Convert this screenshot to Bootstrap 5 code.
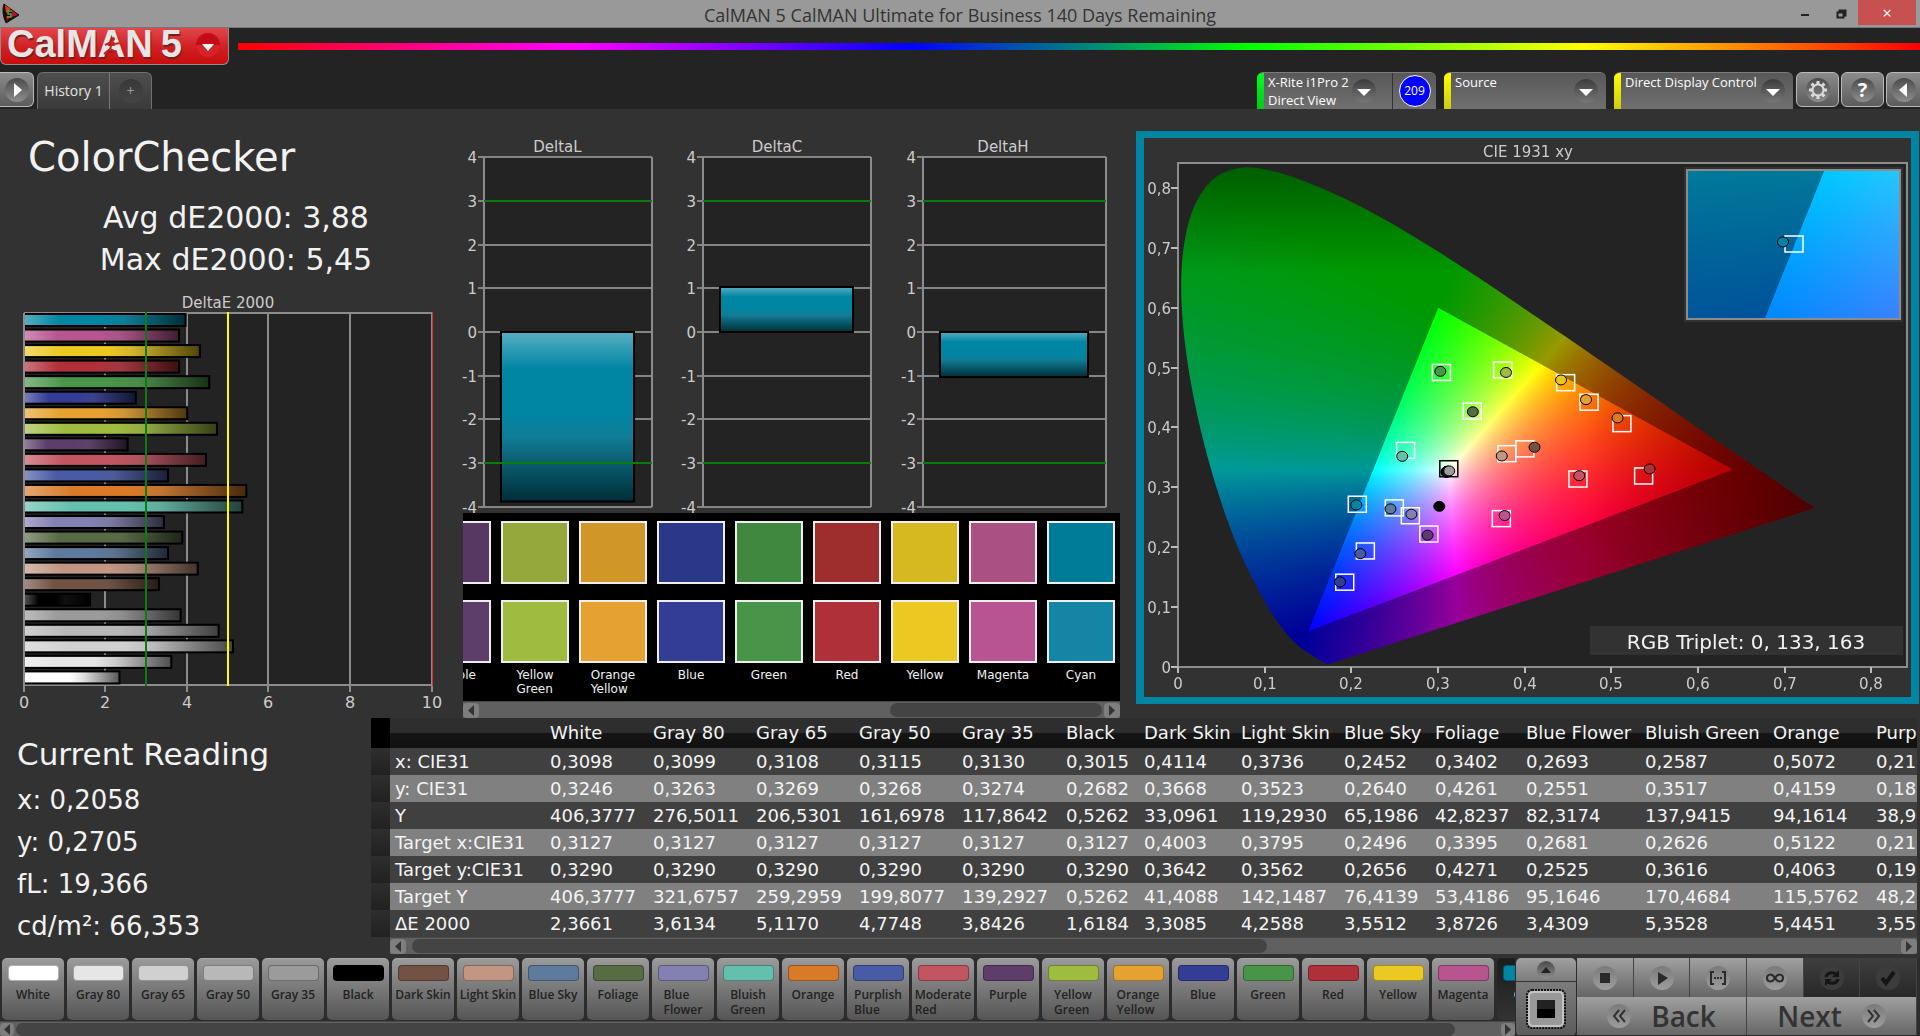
<!DOCTYPE html>
<html lang="en">
<head>
<meta charset="utf-8">
<meta name="viewport" content="width=device-width, initial-scale=1">
<title>CalMAN 5</title>
<link rel="stylesheet" href="https://cdn.jsdelivr.net/npm/bootstrap@5.3.0/dist/css/bootstrap.min.css">
<style>
body{background:#323232;color:#f2f2f2;font-family:"DejaVu Sans",sans-serif;min-height:100vh;overflow:hidden;line-height:1.2}
button{border:0;padding:0;color:inherit;font-family:inherit}
svg text{font-family:"DejaVu Sans",sans-serif;fill:#ccc}
.ui-font{font-family:"Open Sans","Noto Sans",sans-serif}
.titlebar{height:28px;background:#999;color:#333;border-bottom:1px solid #777}
.titlebar .caption{font-size:18px;line-height:30px}
.win-btn{width:43px;height:25px;background:none;color:#222}
.win-close{width:58px;background:#c75050;color:#fff;font-size:16px;line-height:22px}
.top-zone{background:#232323}
.logo-btn{width:229px;height:37px;background:linear-gradient(#e2474b,#cf1f22 55%,#c90d0d);border:1px solid #8d8d8d;border-top:0;border-radius:0 0 6px 6px;padding-left:6px}
.logo-btn svg{display:block;overflow:visible}
.logo-word{font-weight:700;font-size:38px;line-height:32px;color:#e6e6e6;font-family:"Liberation Sans",sans-serif;text-shadow:1px 2px 1px #70201c}
.rainbow{height:7px;margin:15px 0 0 9px;background:linear-gradient(90deg,#f00,#f0f,#00f,#0f0,#ff0,#f00)}
.tool-row{padding-top:7px}
.tool-btn{width:43px;height:35px;border:1px solid #b9b9b9;border-radius:6px;background:linear-gradient(#8b8b8b,#5c5c5c)}
.tool-btn.open-left{width:34px;border-left:0;border-radius:0 6px 6px 0}
.tool-btn.open-right{width:34px;border-right:0;border-radius:6px 0 0 6px}
.tool-set{gap:2px;margin-left:3px}
.orb{width:24px;height:24px;border-radius:50%;background:linear-gradient(#4a4a4a,#8e8e8e);flex:none;display:flex;align-items:center;justify-content:center}
.orb-dark{background:linear-gradient(#3c3c3c,#777)}
.orb-faint{background:linear-gradient(#383838,#454545);color:#999}
.hist{height:37px;margin-left:3px;border:1px solid #707070;border-bottom:0;border-radius:6px 6px 0 0;background:linear-gradient(#4e4e4e,#3a3a3a);font-size:14px;color:#e4e4e4;width:115px}
.hist .tab-name{width:72px;border-right:1px solid #777}
.meter{height:37px;border-radius:6px 6px 0 0;background:linear-gradient(#585858,#707070);border-top:1px solid #7c7c7c;overflow:hidden;font-size:13px;line-height:18px;color:#fff}
.meter .strip{width:7px;flex:none}
.strip-g{background:linear-gradient(#00ff20,#00c81c)}
.strip-y{background:linear-gradient(#ffff00,#cccc10)}
.meter-a{width:179px}.meter-b{width:162px}.meter-c{width:179px}
.count-zone{width:44px;border-left:1px solid #333}
.count{width:32px;height:32px;border-radius:50%;background:#00f;border:1px solid #fff;font-size:12px;line-height:30px}
.workspace{padding-top:1px}
.side-col{width:440px;flex:none}
.mid-col{width:690px;flex:none;padding-left:9px}
.page-title{font-size:40px;line-height:48px;padding:23px 0 0 28px;margin:0 0 16px}
.stats{font-size:30px;line-height:42px;padding-left:32px;margin-bottom:9px}
.swatches{background:#000;margin-left:14px;width:657px;height:188px;padding:8px 5px 0 0;font-size:12px;line-height:14px;gap:10px;overflow:hidden}
.swatch{width:68px;flex:none}
.patch{height:63px;border:2px solid #eee}
.patch-gap{margin-bottom:16px}
.swatch .name{margin-top:5px}
.scroller{height:17px;background:#606060;border-top:1px solid #484848;gap:2px}
.swatch-scroll{width:657px;margin-left:14px}
.swatch-scroll .thumb{width:212px}
.scroller button{width:16px;height:15px;background:#7e7e7e;border-radius:4px;flex:none;line-height:0}
.scroller .thumb{height:14px;background:#444;border-radius:7px}
.cie-col{padding-left:6px}
.cie{border:solid #0085a3;border-width:7px 8px;margin-top:21px;margin-right:1px;position:relative}
.cie svg,.cie canvas{display:block;width:100%}
.cie canvas{position:absolute;left:0;top:0}
.cie svg{position:relative}
.reading{width:371px;flex:none;padding:15px 0 0 17px;font-size:26px;line-height:42px}
.reading h2{font-size:31px;line-height:42px;margin-bottom:4px}
.grid-wrap{overflow:hidden;margin-right:3px;flex:1 1 0;min-width:0}
.readings{table-layout:fixed;width:1600px;font-size:18px;line-height:26px;color:#f4f4f4;border-collapse:collapse;white-space:nowrap}
.readings th,.readings td{font-weight:400;padding:0 0 0 5px;height:27px;overflow:hidden}
.readings thead th,.readings thead td{height:30px;background:linear-gradient(#2e2e2e 48%,#151515 52%,#111)}
.readings tbody tr:nth-child(odd){background:#404040}
.readings tbody tr:nth-child(even){background:#808080}
.readings tbody td:first-child{background:linear-gradient(#2e2e2e,#212121)}
.readings thead td:first-child{background:#000}
.grid-scroll{margin-left:19px}
.dock{background:#2c2c2c;height:78px}
.chips{flex:1 1 0;min-width:0;overflow:hidden;gap:3px;padding-left:2px}
.chip{width:62px;height:62px;flex:none;border-radius:5px;border-top:1px solid #aaa;background:linear-gradient(#9a9a9a,#555);color:#222;font-size:12px;font-weight:600;line-height:15px;padding-top:6px}
.chip .led{width:51px;height:16px;border-radius:4px;border:1px solid rgba(0,0,0,.3);margin-bottom:6px}
.chip.active{background:linear-gradient(#1c1c1c,#333);color:#fff;border-color:#222}
.dock-scroll{height:15px}
.dock-scroll .thumb{height:13px}.dock-scroll button{width:14px;height:13px}
.pick{width:60px;border-radius:5px;overflow:hidden;margin:0 1px 0 1px}
.pick .up{height:24px;background:linear-gradient(#a0a0a0,#7c7c7c);border-bottom:1px solid #333}
.pick .orb{width:18px;height:18px}
.pick .target{height:53px;background:linear-gradient(#7c7c7c,#5c5c5c)}
.transport{width:343px;padding-right:3px}
.transport button{background:linear-gradient(#a0a0a0,#666);color:#2a2a2a;border-right:1px solid #444}
.transport .orb{background:linear-gradient(#7a7a7a,#9d9d9d)}
.transport .row-a{height:39px}.transport .row-b{height:38px}
.transport .off{background:linear-gradient(#3e3e3e,#282828);color:#151515}
.transport .off .orb{background:#3c3c3c}
.row-b button{gap:20px}
.nav-word{font-size:28px;font-weight:600;color:#333;line-height:36px}
</style>
</head>
<body class="d-flex flex-column">
<header class="top-zone">
  <div class="titlebar ui-font position-relative">
    <svg class="position-absolute start-0 top-0" width="24" height="26" viewBox="0 0 24 26"><path d="M4 4 19 15 6 23Q1 12 4 4Z" fill="#210b08" stroke="#111"/><path d="M5 5 11 9 6 13Z" fill="#e3381c"/><path d="M12 10 18 15 12 17Z" fill="#b01430"/><path d="M6 16 11 16 7 21Z" fill="#c00"/><path d="M12 11H8V14H11V17H7" fill="none" stroke="#4fae3c" stroke-width="1.5"/></svg>
    <div class="caption text-center">CalMAN 5 CalMAN Ultimate for Business 140 Days Remaining</div>
    <div class="position-absolute end-0 top-0 d-flex">
      <button class="win-btn" aria-label="Minimize"><svg width="43" height="25"><path d="M29 15h8" stroke="#222" stroke-width="2"/></svg></button>
      <button class="win-btn ps-3" aria-label="Restore"><svg width="20" height="16" viewBox="0 0 20 16"><path d="M2.500 6.500h6v5h-6zM4.500 6V4.500h6v5H9" fill="none" stroke="#222" stroke-width="2"/></svg></button>
      <button class="win-btn win-close me-1" aria-label="Close">×</button>
    </div>
  </div>
  <div class="d-flex align-items-start">
    <button class="logo-btn flex-shrink-0 d-flex align-items-start position-relative" aria-label="CalMAN 5 menu">
      <span class="logo-word">CalMAN</span><span class="logo-word ms-2">5</span>
      <svg class="position-absolute start-0 top-0" width="220" height="36" viewBox="0 0 220 36" fill="none">
        <circle cx="112" cy="11" r="2" fill="#c82020"/><path d="M104 17l6-3 4 2 5-1M111 15l-2 6-6 5M109 21l6 3-2 6" stroke="#c82020" stroke-width="2"/>
        <circle cx="207" cy="17" r="12" fill="#c30c18"/><path d="M207 29a12 12 0 0 0 12-12h-24a12 12 0 0 0 12 12z" fill="#dd3636" opacity=".6"/><path d="M201 16h12l-6 7z" fill="#fff"/>
      </svg>
    </button>
    <div class="rainbow flex-grow-1"></div>
  </div>
  <div class="tool-row d-flex align-items-start ui-font">
    <button class="tool-btn open-left d-flex align-items-center justify-content-center" aria-label="Expand"><span class="orb"><svg width="24" height="24"><path d="M9 5l8 7-8 7z" fill="#fff"/></svg></span></button>
    <div class="hist d-flex align-items-stretch">
      <button class="tab-name bg-transparent">History 1</button>
      <button class="flex-grow-1 bg-transparent d-flex align-items-center justify-content-center" aria-label="Add"><span class="orb orb-faint">+</span></button>
    </div>
    <div class="ms-auto d-flex align-items-start">
      <div class="meter meter-a d-flex me-2"><span class="strip strip-g"></span><div class="ps-1 flex-grow-1 text-nowrap">X-Rite i1Pro 2<br>Direct View</div>
        <button class="orb orb-dark align-self-center me-3" aria-label="Meter menu"><svg width="24" height="24"><path d="M5 10h14l-7 7z" fill="#fff"/></svg></button>
        <div class="count-zone d-flex align-items-center justify-content-center"><span class="count text-center">209</span></div></div>
      <div class="meter meter-b d-flex me-2"><span class="strip strip-y"></span><div class="ps-1 flex-grow-1">Source</div><button class="orb orb-dark align-self-center me-2" aria-label="Source menu"><svg width="24" height="24"><path d="M5 10h14l-7 7z" fill="#fff"/></svg></button></div>
      <div class="meter meter-c d-flex"><span class="strip strip-y"></span><div class="ps-1 flex-grow-1 text-nowrap">Direct Display Control</div><button class="orb orb-dark align-self-center me-2" aria-label="Display menu"><svg width="24" height="24"><path d="M5 10h14l-7 7z" fill="#fff"/></svg></button></div>
      <div class="tool-set d-flex">
        <button class="tool-btn d-flex align-items-center justify-content-center" aria-label="Settings"><span class="orb"><svg width="24" height="24" viewBox="0 0 24 24"><circle cx="12" cy="12" r="5.500" fill="none" stroke="#ddd" stroke-width="2"/><g stroke="#ddd" stroke-width="3"><path d="M12 3v3M12 18v3M3 12h3M18 12h3M5.600 5.600l2 2M16.400 16.400l2 2M18.400 5.600l-2 2M7.600 16.400l-2 2"/></g></svg></span></button>
        <button class="tool-btn d-flex align-items-center justify-content-center" aria-label="Help"><span class="orb fw-bold fs-5 lh-1 text-white">?</span></button>
        <button class="tool-btn open-right d-flex align-items-center justify-content-center" aria-label="Collapse"><span class="orb"><svg width="24" height="24"><path d="M15 5l-8 7 8 7z" fill="#fff"/></svg></span></button>
      </div>
    </div>
  </div>
</header>

<main class="workspace">
  <div class="d-flex">
    <section class="side-col">
      <h1 class="page-title fw-normal">ColorChecker</h1>
      <div class="stats text-center">Avg dE2000: 3,88<br>Max dE2000: 5,45</div>
      <svg id="deltaE" class="d-block overflow-visible" width="440" height="425" viewBox="0 0 440 425"></svg>
    </section>
    <section class="mid-col">
      <div class="d-flex" id="deltas"></div>
      <div class="swatches d-flex justify-content-end" id="swatches"></div>
      <div class="scroller swatch-scroll d-flex align-items-center">
        <button aria-label="Scroll left"><svg width="16" height="15"><path d="M11 2v11L5 7.500z" fill="#333"/></svg></button><div class="flex-grow-1"></div><div class="thumb"></div><button aria-label="Scroll right"><svg width="16" height="15"><path d="M5 2v11l6-5.500z" fill="#333"/></svg></button>
      </div>
    </section>
    <section class="cie-col flex-grow-1">
      <div class="cie"><canvas id="gamut" width="767" height="559"></canvas><svg id="cieChart" viewBox="0 0 767 559"></svg></div>
    </section>
  </div>
  <div class="d-flex">
    <section class="reading"><h2 class="fw-normal">Current Reading</h2><div>x: 0,2058</div><div>y: 0,2705</div><div>fL: 19,366</div><div>cd/m²: 66,353</div></section>
    <section class="grid-wrap">
      <table class="readings" id="readings"></table>
      <div class="scroller grid-scroll d-flex align-items-center"><button aria-label="Scroll left"><svg width="16" height="15"><path d="M11 2v11L5 7.500z" fill="#333"/></svg></button><div class="thumb ms-1" style="width:56%"></div><div class="flex-grow-1"></div><button aria-label="Scroll right"><svg width="16" height="15"><path d="M5 2v11l6-5.500z" fill="#333"/></svg></button></div>
    </section>
  </div>
</main>

<footer class="dock ui-font d-flex mt-auto">
  <div class="d-flex flex-column flex-grow-1" style="min-width:0">
    <div class="chips d-flex" id="chips"></div>
    <div class="scroller dock-scroll d-flex align-items-center mt-auto"><button aria-label="Scroll left"><svg width="14" height="13"><path d="M10 1v11L4 6.500z" fill="#333"/></svg></button><div class="thumb" style="width:95%"></div><div class="flex-grow-1"></div><button aria-label="Scroll right"><svg width="14" height="13"><path d="M4 1v11l6-5.500z" fill="#333"/></svg></button></div>
  </div>
  <div class="pick flex-shrink-0">
    <button class="up w-100 d-flex align-items-center justify-content-center" aria-label="Up"><span class="orb"><svg class="d-block" width="18" height="18"><path d="M4 12h10L9 6z" fill="#222"/></svg></span></button>
    <button class="target w-100 d-flex align-items-center justify-content-center" aria-label="Measure"><svg width="40" height="40"><rect x="1" y="1" width="38" height="38" rx="5" fill="#999" stroke="#111" stroke-width="2" stroke-dasharray="2 1"/><rect x="3" y="3" width="34" height="34" rx="4" fill="none" stroke="#c4c4c4" stroke-width="2"/><path d="M11 11h18v18H11z" fill="#000"/><path d="M11 11h18v9H11z" fill="#222"/></svg></button>
  </div>
  <div class="transport flex-shrink-0">
    <div class="row-a d-flex" id="transport"></div>
    <div class="row-b d-flex">
      <button class="flex-fill w-50 d-flex align-items-center justify-content-center"><span class="orb"><svg class="d-block" width="24" height="24" fill="none" stroke="#333" stroke-width="2"><path d="M12 6l-5 6 5 6M18 6l-5 6 5 6"/></svg></span><span class="nav-word">Back</span></button>
      <button class="flex-fill w-50 d-flex align-items-center justify-content-center"><span class="nav-word">Next</span><span class="orb"><svg class="d-block" width="24" height="24" fill="none" stroke="#333" stroke-width="2"><path d="M6 6l5 6-5 6M12 6l5 6-5 6"/></svg></span></button>
    </div>
  </div>
</footer>

<script src="https://cdn.jsdelivr.net/npm/bootstrap@5.3.0/dist/js/bootstrap.bundle.min.js"></script>
<script>
// name, colour, dE2000, measured xy, target xy, reference colour
const patches = [
 ["White","#ffffff",2.34,.3098,.3246],["Gray 80","#e6e6e6",3.61,.3099,.3263],["Gray 65","#d0d0d0",5.12,.3108,.3269],["Gray 50","#b8b8b8",4.77,.3115,.3268],["Gray 35","#9b9b9b",3.84,.3130,.3274],["Black","#000000",1.62,.3015,.2682],
 ["Dark Skin","#735244",3.31,.4114,.3668,.4003,.3642],["Light Skin","#c29682",4.26,.3736,.3523,.3795,.3562],["Blue Sky","#5e7a9c",3.53,.2452,.2640,.2496,.2656],["Foliage","#586c43",3.88,.3402,.4261,.3395,.4271],
 ["Blue Flower","#8480b1",3.43,.2693,.2551,.2681,.2525],["Bluish Green","#64bfac",5.35,.2587,.3517,.2626,.3616],["Orange","#d87a28",5.45,.5072,.4159,.5122,.4063],["Purplish Blue","#4a5ba5",3.53,.2104,.1892,.2162,.1937],
 ["Moderate Red","#c35461",4.46,.4630,.3194,.4615,.3138],["Purple","#5d3e6a",2.54,.2880,.2200,.2895,.2220,"#563862"],["Yellow Green","#9fbb40",4.73,.3785,.4917,.3746,.4960,"#94a83c"],["Orange Yellow","#e6a230",4.0,.4708,.4464,.4743,.4421,"#d09628"],
 ["Blue","#343d96",2.74,.1869,.1421,.1924,.1416,"#293889"],["Green","#489448",4.54,.3027,.4936,.3040,.4917,"#408840"],["Red","#b0303a",3.8,.5442,.3307,.5373,.3189,"#9e2e2e"],["Yellow","#ecc822",4.31,.4420,.4792,.4473,.4747,"#d6b820"],
 ["Magenta","#b85490",3.8,.3769,.2528,.3731,.2477,"#aa5082"],["Cyan","#0085a3",3.96,.2058,.2705,.2069,.2717,"#007c98"]];
const mix = (c, t, k) => "rgb(" + [1,3,5].map(i => Math.round(parseInt(c.substr(i,2),16)*(1-k) + t*k)).join() + ")";
const stops = c => `<stop offset="0" stop-color="${mix(c,255,.34)}"/><stop offset=".22" stop-color="${c}"/><stop offset=".48" stop-color="${c}"/><stop offset=".62" stop-color="${mix(c,90,.18)}"/><stop offset="1" stop-color="${mix(c,0,.66)}"/>`;

// DeltaE bar chart
(() => {
  const x0 = 24, unit = 40.8, top = 23, bottom = 396;
  let s = `<rect x="${x0}" y="${top}" width="408" height="${bottom-top}" fill="#232323"/>`;
  for (let v = 0; v <= 10; v += 2) { const x = Math.floor(x0+v*unit);
    s += `<path d="M${x} ${top}V${bottom+6}" stroke="#8c8c8c" stroke-width="2"/><text x="${x}" y="418" font-size="16" text-anchor="middle">${v}</text>`; }
  s += `<path d="M${x0} ${top}H432M${x0} ${bottom-1}H432" stroke="#8c8c8c" stroke-width="2"/>`;
  [...patches].reverse().forEach((p, i) => {
    const y = 24 + i*15.54;
    s += `<defs><linearGradient id="b${i}">${stops(p[1])}</linearGradient></defs><rect x="${x0}" y="${y}" width="${p[2]*unit}" height="12" fill="url(#b${i})" stroke="#000" stroke-width="2"/>`;
  });
  s += `<path d="M${x0} ${top}V${bottom}" stroke="#8c8c8c" stroke-width="2"/><path d="M146 22V396" stroke="#0a7d14" stroke-width="2"/><path d="M228 22V396" stroke="#ff0" stroke-width="2"/><path d="M432.500 22V396" stroke="#e03030"/>`;
  s += `<text x="228" y="18" font-size="15" text-anchor="middle">DeltaE 2000</text>`;
  document.getElementById("deltaE").innerHTML = s;
})();

// DeltaL / C / H columns
document.getElementById("deltas").innerHTML = [["DeltaL",-3.88,219,168],["DeltaC",1.03,220,168],["DeltaH",-1.03,232,183]].map(([t,v,w,pw],k) => {
  const x0 = 35, y = n => 222 - n*43.7;
  let s = `<rect x="${x0}" y="${y(4)}" width="${pw}" height="${y(-4)-y(4)}" fill="#232323"/>`;
  for (let n = 4; n >= -4; n--) s += `<path d="M${x0-6} ${Math.round(y(n))}H${x0+pw}" stroke="#858585" stroke-width="2"/><text x="${x0-7}" y="${y(n)+6}" font-size="15" text-anchor="end">${n}</text>`;
  s += `<path d="M${x0} 47V397M${x0+pw} 47V397" stroke="#8c8c8c" stroke-width="2"/>`;
  s += `<defs><linearGradient id="d${k}" x2="0" y2="1">${stops("#0085a3")}</linearGradient></defs><rect x="${x0+17}" y="${Math.min(y(v),y(0))}" width="${pw-35}" height="${Math.abs(v)*43.7}" fill="url(#d${k})" stroke="#000" stroke-width="2"/>`;
  s += `<path d="M${x0} 91H${x0+pw}M${x0} 353H${x0+pw}" stroke="#087d0c" stroke-width="2"/><text x="${w/2-1}" y="42" font-size="15" text-anchor="middle">${t}</text>`;
  return `<svg class="d-block overflow-visible flex-shrink-0" width="${w}" height="403">${s}</svg>`;
}).join("");

document.getElementById("swatches").innerHTML = patches.slice(15).map(p =>
  `<div class="swatch"><div class="patch patch-gap" style="background:${p[7]}"></div><div class="patch" style="background:${p[0]==="Cyan"?"#1485a5":p[1]}"></div><div class="name d-flex justify-content-center"><span>${p[0].replace(" ","<br>")}</span></div></div>`).join("");

document.getElementById("chips").innerHTML = patches.map((p,i) => {
  const label = i > 9 ? p[0].replace(" ","<br>") : p[0];
  return `<button class="chip d-flex flex-column align-items-center${i===23?" active":""}"><span class="led" style="background:${p[1]}"></span><span class="text-start text-nowrap">${label}</span></button>`;
}).join("");

// Chromaticity diagram
const locus = [[.1741,.005],[.1714,.0051],[.1644,.0109],[.1566,.0177],[.144,.0297],[.1355,.0399],[.1241,.0578],[.1096,.0868],[.0913,.1327],[.0687,.2007],[.0454,.295],[.0235,.4127],[.0082,.5384],[.0039,.6548],[.0139,.7502],[.0389,.812],[.0743,.8338],[.1142,.8262],[.1547,.8059],[.1929,.7816],[.2296,.7543],[.2658,.7243],[.3016,.6923],[.3373,.6589],[.3731,.6245],[.4441,.5547],[.5125,.4866],[.5752,.4242],[.627,.3725],[.6658,.334],[.6915,.3083],[.719,.2809],[.7347,.2653]];
const OX = 34, OY = 529, SX = 866.6, SY = 599, px = x => OX + x*SX, py = y => OY - y*SY;
function shade(x, y) {
  const z = 1 - x - y;
  const c = [3.2406*x-1.5372*y-.4986*z, -.9689*x+1.8758*y+.0415*z, .0557*x-.204*y+1.057*z];
  const out = c.some(v => v < 0), m = Math.max(...c);
  let f = out ? .6 : 1;
  f *= Math.min(1, 1-(x-.47)*1.85) * Math.min(1, 1-(y-.66)*2.2);
  return c.map(v => Math.max(0,v)/m*f*255);
}
function field(w, h, toXY) {
  const k = document.createElement("canvas"); k.width = w*2; k.height = h*2;
  const g = k.getContext("2d"), d = g.createImageData(w*2, h*2);
  for (let j = 0, i = 0; j < h*2; j++) for (let q = 0; q < w*2; q++, i += 4) {
    const c = shade(...toXY(q/2, j/2)); d.data[i]=c[0]; d.data[i+1]=c[1]; d.data[i+2]=c[2]; d.data[i+3]=255;
  }
  g.putImageData(d, 0, 0); return k;
}
const ctx = document.getElementById("gamut").getContext("2d");
ctx.fillStyle = "#232323"; ctx.fillRect(34, 25, 729, 504);
ctx.save(); ctx.beginPath();
locus.forEach(([x,y], i) => {
  if (!i) return ctx.moveTo(px(x), py(y));
  const a = locus[i-2] || locus[i-1], b = locus[i-1], c = locus[i], d = locus[i+1] || c;
  ctx.bezierCurveTo(px(b[0]+(c[0]-a[0])/6), py(b[1]+(c[1]-a[1])/6), px(c[0]-(d[0]-b[0])/6), py(c[1]-(d[1]-b[1])/6), px(c[0]), py(c[1]));
});
ctx.closePath(); ctx.clip();
ctx.drawImage(field(767, 559, (a,b) => [(a-OX)/SX, (OY-b)/SY]), 0, 0, 767, 559);
ctx.restore();
ctx.fillStyle = "#323232"; ctx.fillRect(540, 29, 219, 155);
ctx.drawImage(field(212, 148, (a,b) => [.2088+(a-106)/SX/5, .2717-(b-74)/SY/5]), 544, 33, 212, 148);

(() => {
  let s = `<path d="M34 25H763V529H34Z" fill="none" stroke="#8c8c8c" stroke-width="2"/><rect x="543" y="32" width="213" height="149" fill="none" stroke="#8c8c8c" stroke-width="2"/>`;
  for (let i = 0; i <= 8; i++) {
    const t = i ? "0," + i : "0", x = Math.round(px(i/10)), y = Math.round(py(i/10));
    s += `<path d="M${x} 529v6M34 ${y}h-7" stroke="#bbb" stroke-width="2"/><text x="${x}" y="551" font-size="15" text-anchor="middle">${t}</text><text x="27" y="${y+6}" font-size="15" text-anchor="end">${t}</text>`;
  }
  const box = (x,y,c) => `<rect x="${x-9}" y="${y-8}" width="18" height="16" fill="none" stroke="${c}" stroke-width="1.500"/>`;
  const dot = (x,y,c) => `<ellipse cx="${x}" cy="${y}" rx="5.500" ry="5" fill="${c}" stroke="#000"/>`;
  s += box(px(.3125), py(.331), "#000");
  patches.forEach(p => { if (p[5]) s += box(px(p[5]), py(p[6]), "#fff"); });
  patches.forEach((p,i) => s += dot(px(p[3]), py(p[4]), i < 4 ? "#333" : p[1]));
  s += box(650, 106, "#fff") + dot(639, 104, "#0085a3");
  s += `<rect x="446" y="488" width="313" height="29" fill="#323232"/><text x="602" y="511" font-size="20" text-anchor="middle" style="fill:#f2f2f2">RGB Triplet: 0, 133, 163</text><text x="384" y="19" font-size="15" text-anchor="middle">CIE 1931 xy</text>`;
  document.getElementById("cieChart").innerHTML = s;
})();

// Readings table
const cols = [19,155,103,103,103,103,104,78,97,103,91,91,119,128,103,100];
const rows = [
 ["x: CIE31","0,3098","0,3099","0,3108","0,3115","0,3130","0,3015","0,4114","0,3736","0,2452","0,3402","0,2693","0,2587","0,5072","0,2104"],
 ["y: CIE31","0,3246","0,3263","0,3269","0,3268","0,3274","0,2682","0,3668","0,3523","0,2640","0,4261","0,2551","0,3517","0,4159","0,1892"],
 ["Y","406,3777","276,5011","206,5301","161,6978","117,8642","0,5262","33,0961","119,2930","65,1986","42,8237","82,3174","137,9415","94,1614","38,9021"],
 ["Target x:CIE31","0,3127","0,3127","0,3127","0,3127","0,3127","0,3127","0,4003","0,3795","0,2496","0,3395","0,2681","0,2626","0,5122","0,2162"],
 ["Target y:CIE31","0,3290","0,3290","0,3290","0,3290","0,3290","0,3290","0,3642","0,3562","0,2656","0,4271","0,2525","0,3616","0,4063","0,1937"],
 ["Target Y","406,3777","321,6757","259,2959","199,8077","139,2927","0,5262","41,4088","142,1487","76,4139","53,4186","95,1646","170,4684","115,5762","48,2110"],
 ["ΔE 2000","2,3661","3,6134","5,1170","4,7748","3,8426","1,6184","3,3085","4,2588","3,5512","3,8726","3,4309","5,3528","5,4451","3,5507"]];
document.getElementById("readings").innerHTML = `<colgroup>${cols.map(w => `<col style="width:${w}px">`).join("")}</colgroup><thead><tr><td></td><td></td>${patches.slice(0,14).map(p => `<th scope="col">${p[0]}</th>`).join("")}</tr></thead><tbody>${rows.map(r => `<tr><td></td>${r.map((c,i) => i ? `<td>${c}</td>` : `<th scope="row">${c}</th>`).join("")}</tr>`).join("")}</tbody>`;

const icons = [
 '<path d="M7 7h10v10H7z" fill="currentColor"/>','<path d="M8 6l10 6-10 7z" fill="currentColor"/>',
 '<path d="M8 6H5v12h3M16 6h3v12h-3" fill="none" stroke="currentColor" stroke-width="2"/><path d="M8 12h8" stroke="currentColor" stroke-width="2" stroke-dasharray="2 1"/>',
 '<path d="M12 12c-3-5-8-4-8 0s5 5 8 0 8-4 8 0-5 5-8 0z" fill="none" stroke="currentColor" stroke-width="2"/>',
 '<path d="M6 11a6 5 0 0 1 10-3M18 13a6 5 0 0 1-10 3" fill="none" stroke="currentColor" stroke-width="3"/><path d="M19 4v7h-7zM5 20v-7h7z" fill="currentColor"/>',
 '<path d="M6 12l4 5 8-11" fill="none" stroke="currentColor" stroke-width="4"/>'];
const names = ["Stop","Play","Series","Loop","Refresh","Accept"];
document.getElementById("transport").innerHTML = icons.map((d,i) => `<button aria-label="${names[i]}" class="flex-fill d-flex align-items-center justify-content-center${i>3?" off":""}"><span class="orb"><svg class="d-block" width="24" height="24">${d}</svg></span></button>`).join("");
</script>
</body>
</html>
